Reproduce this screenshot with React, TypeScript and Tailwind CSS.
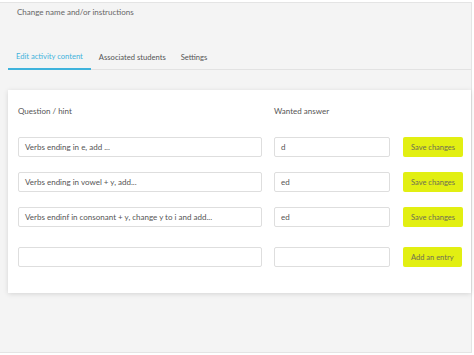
import React from 'react';

const rows = [
  { hint: 'Verbs ending in e, add ...', answer: 'd', label: 'Save changes' },
  { hint: 'Verbs ending in vowel + y, add...', answer: 'ed', label: 'Save changes' },
  { hint: 'Verbs endinf in consonant + y, change y to i and add...', answer: 'ed', label: 'Save changes' },
  { hint: '', answer: '', label: 'Add an entry' },
];

const App: React.FC = () => {
  return (
    <div
      className="w-[474px] h-[355px] overflow-hidden bg-white text-[#555]"
      style={{ fontFamily: 'Lato, "Open Sans", sans-serif' }}
    >
      <div className="mt-[2px] mr-[2px] h-[351px] bg-[#f4f4f4] border-t border-r border-b border-[#e4e4e4] flex flex-col">
        {/* header */}
        <div className="pl-[17px] pt-[3px] text-[8px] leading-[12px] text-[#666]">
          Change name and/or instructions
        </div>

        {/* tabs */}
        <div className="mt-[33px] ml-[8px] flex items-end border-b border-[#e2e2e2] text-[7.6px]">
          <div className="px-[8px] pb-[6px] border-b-2 border-[#3fb3dc] text-[#3fb3dc] -mb-px">
            Edit activity content
          </div>
          <div className="pl-[8px] pr-[7px] pb-[6px]">Associated students</div>
          <div className="px-[8px] pb-[6px]">Settings</div>
        </div>

        {/* card */}
        <div className="mt-[20px] ml-[8px] bg-white shadow-[0_1px_5px_rgba(0,0,0,0.13)] pl-[10px] pt-[15px] pb-[26px]">
          <div className="flex text-[8px] leading-[12px] text-[#555]">
            <div className="w-[256px]">Question / hint</div>
            <div>Wanted answer</div>
          </div>

          <div className="mt-[20px] flex flex-col gap-[15px]">
            {rows.map((r, i) => (
              <div key={i} className={`flex items-center ${i === 3 ? 'mt-[5px]' : ''}`}>
                <div className="w-[244px] h-[20px] border border-[#dedede] rounded-[2px] bg-white flex items-center pl-[6px] text-[8px] text-[#555] whitespace-nowrap">
                  {r.hint}
                </div>
                <div className="ml-[12px] w-[116px] h-[20px] border border-[#dedede] rounded-[2px] bg-white flex items-center pl-[6px] text-[8px] text-[#555]">
                  {r.answer}
                </div>
                <button className="ml-[13px] h-[20px] px-[8px] rounded-[2px] bg-[#e2ef12] text-[7.5px] text-[#6e6e55] whitespace-nowrap">
                  {r.label}
                </button>
              </div>
            ))}
          </div>
        </div>
      </div>
    </div>
  );
};

export default App;
